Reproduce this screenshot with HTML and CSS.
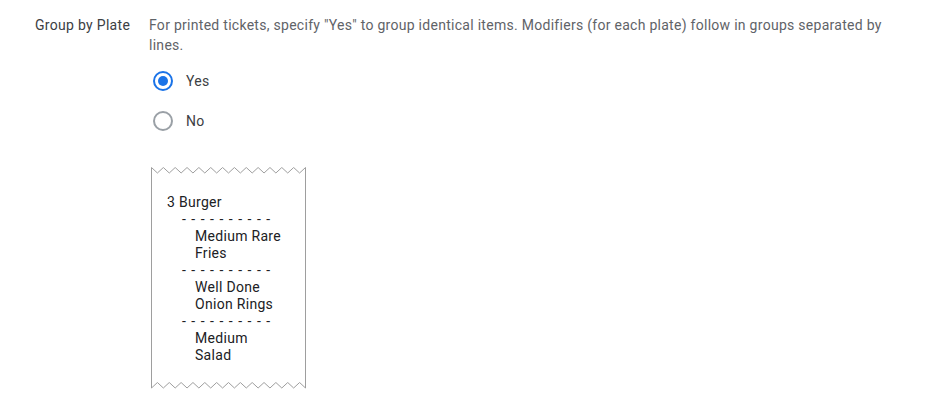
FILE: index.html
```html
<!DOCTYPE html>
<html>
<head>
<meta charset="utf-8">
<link rel="stylesheet" href="styles.css">
</head>
<body>
<div class="row">
  <div class="label">Group by Plate</div>
  <div class="content">
    <p class="desc">For printed tickets, specify "Yes" to group identical items. Modifiers (for each plate) follow in groups separated by lines.</p>
    <div class="radios">
      <label class="radio-row"><span class="radio checked"><span class="dot"></span></span><span class="radio-text">Yes</span></label>
      <label class="radio-row"><span class="radio"></span><span class="radio-text">No</span></label>
    </div>
    <div class="receipt">
      <svg class="edge" width="155" height="7" viewBox="0 0 155 7">
        <polyline fill="none" stroke="#9e9e9e" stroke-width="1" points="0.5,7 0.5,0.5 6.42,6 12.35,0.5 18.27,6 24.19,0.5 30.12,6 36.04,0.5 41.96,6 47.88,0.5 53.81,6 59.73,0.5 65.65,6 71.58,0.5 77.5,6 83.42,0.5 89.35,6 95.27,0.5 101.19,6 107.12,0.5 113.04,6 118.96,0.5 124.88,6 130.81,0.5 136.73,6 142.65,0.5 148.58,6 154.5,0.5 154.5,7"/>
      </svg>
      <div class="ticket">
        <div class="item">3 Burger</div>
        <div class="dash">----------</div>
        <div class="mod">Medium Rare</div>
        <div class="mod">Fries</div>
        <div class="dash">----------</div>
        <div class="mod">Well Done</div>
        <div class="mod">Onion Rings</div>
        <div class="dash">----------</div>
        <div class="mod">Medium</div>
        <div class="mod">Salad</div>
      </div>
      <svg class="edge" width="155" height="7" viewBox="0 0 155 7">
        <polyline fill="none" stroke="#9e9e9e" stroke-width="1" points="0.5,0 0.5,6 6.42,0.5 12.35,6 18.27,0.5 24.19,6 30.12,0.5 36.04,6 41.96,0.5 47.88,6 53.81,0.5 59.73,6 65.65,0.5 71.58,6 77.5,0.5 83.42,6 89.35,0.5 95.27,6 101.19,0.5 107.12,6 113.04,0.5 118.96,6 124.88,0.5 130.81,6 136.73,0.5 142.65,6 148.58,0.5 154.5,6 154.5,0"/>
      </svg>
    </div>
  </div>
</div>
</body>
</html>
```

FILE: styles.css
```css
html, body {
  margin: 0;
  padding: 0;
  background: #ffffff;
}
body {
  font-family: Roboto, "Liberation Sans", Arial, sans-serif;
  font-size: 14px;
}
.row {
  display: flex;
  padding: 15px 0 0 35px;
}
.label {
  width: 114px;
  flex: none;
  color: #3c4043;
  line-height: 20px;
  letter-spacing: 0.3px;
}
.content {
  width: 745px;
}
.desc {
  margin: 0;
  color: #5f6368;
  line-height: 20px;
  letter-spacing: 0.28px;
}
.radios {
  margin-top: 6px;
  display: flex;
  flex-direction: column;
}
.radio-row {
  display: flex;
  align-items: center;
  height: 40px;
  color: #3c4043;
  letter-spacing: 0.3px;
}
.radio {
  box-sizing: border-box;
  width: 20px;
  height: 20px;
  margin-left: 4px;
  border: 2px solid #9aa0a6;
  border-radius: 50%;
  display: flex;
  align-items: center;
  justify-content: center;
}
.radio.checked {
  border-color: #1a73e8;
}
.dot {
  width: 10px;
  height: 10px;
  border-radius: 50%;
  background: #1a73e8;
}
.radio-text {
  margin-left: 13px;
}
.receipt {
  margin-top: 26px;
  margin-left: 2px;
  width: 155px;
}
.edge {
  display: block;
}
.ticket {
  border-left: 1px solid #9e9e9e;
  border-right: 1px solid #9e9e9e;
  padding: 20px 0 18px 15px;
  color: #202124;
  line-height: 17px;
  letter-spacing: 0.3px;
}
.dash {
  margin-left: 15px;
  letter-spacing: 5.5px;
  line-height: 17px;
}
.mod {
  margin-left: 28px;
}
```
